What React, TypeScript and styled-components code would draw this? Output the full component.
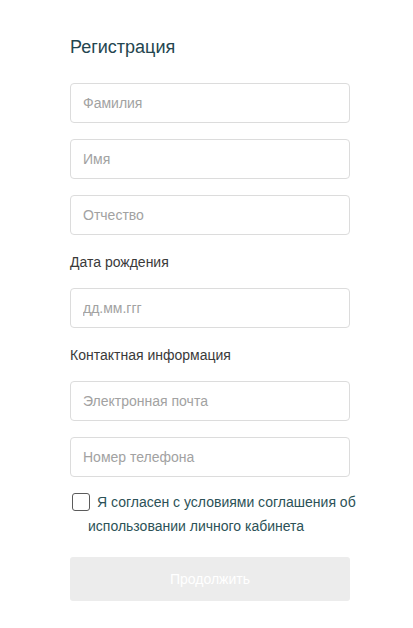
import React from "react";
import styled, { createGlobalStyle } from "styled-components";

const Global = createGlobalStyle`
  html, body { margin: 0; padding: 0; background: #ffffff; }
  body { font-family: "Liberation Sans", Arial, sans-serif; }
  * { box-sizing: border-box; }
`;

const Page = styled.div`
  padding: 36px 0 0 70px;
`;

const Form = styled.form`
  width: 280px;
  display: flex;
  flex-direction: column;
`;

const Title = styled.h1`
  margin: 0 0 25px;
  font-size: 18px;
  line-height: 22px;
  font-weight: 400;
  color: #24464f;
`;

const Input = styled.input`
  display: block;
  width: 100%;
  height: 40px;
  margin: 0 0 16px;
  padding: 0 12px;
  border: 1px solid #dcdcdc;
  border-radius: 4px;
  font-family: "Liberation Sans", Arial, sans-serif;
  font-size: 14px;
  color: #333;
  outline: none;
  &::placeholder { color: #a2a2a2; }
`;

const SectionLabel = styled.div`
  font-size: 14px;
  line-height: 20px;
  color: #3a3a3a;
  margin: 1px 0 16px;
`;

const Agree = styled.label`
  display: block;
  padding-left: 18px;
  margin: -3px -16px 0 0;
  font-size: 14px;
  line-height: 24px;
  color: #2c5257;
`;

const Box = styled.span`
  display: inline-block;
  width: 18px;
  height: 18px;
  margin: 0 7px 0 -16px;
  vertical-align: -4px;
  border: 1px solid #5b5b5b;
  border-radius: 3px;
  background: #fff;
`;

const Submit = styled.button`
  margin-top: 19px;
  height: 44px;
  width: 100%;
  border: none;
  border-radius: 3px;
  background: #ececec;
  color: #ffffff;
  font-family: "Liberation Sans", Arial, sans-serif;
  font-size: 14px;
`;

export default function App() {
  return (
    <Page>
      <Global />
      <Form onSubmit={(e) => e.preventDefault()}>
        <Title>Регистрация</Title>
        <Input placeholder="Фамилия" />
        <Input placeholder="Имя" />
        <Input placeholder="Отчество" />
        <SectionLabel>Дата рождения</SectionLabel>
        <Input placeholder="дд.мм.ггг" />
        <SectionLabel>Контактная информация</SectionLabel>
        <Input placeholder="Электронная почта" />
        <Input placeholder="Номер телефона" />
        <Agree>
          <Box />Я согласен с условиями соглашения об использовании личного кабинета
        </Agree>
        <Submit type="button" disabled>Продолжить</Submit>
      </Form>
    </Page>
  );
}
